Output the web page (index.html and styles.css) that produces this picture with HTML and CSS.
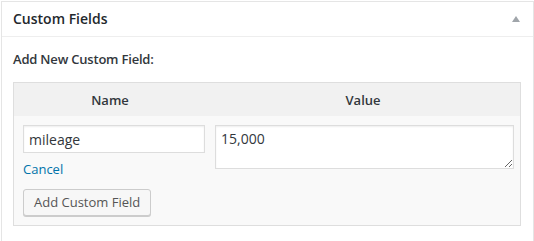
FILE: index.html
```html
<!DOCTYPE html>
<html>
<head>
<meta charset="utf-8">
<link rel="stylesheet" href="styles.css">
</head>
<body>
<div class="postbox">
  <div class="hndle">
    <h2 class="hndle-title">Custom Fields</h2>
    <span class="toggle" aria-hidden="true"></span>
  </div>
  <div class="inside">
    <p class="add-title">Add New Custom Field:</p>
    <div class="meta-table">
      <div class="meta-head">
        <div class="col-name">Name</div>
        <div class="col-value">Value</div>
      </div>
      <div class="meta-body">
        <div class="cell-left">
          <input class="key-input" type="text" value="mileage">
          <a class="cancel" href="#">Cancel</a>
          <button class="button" type="button">Add Custom Field</button>
        </div>
        <div class="cell-right">
          <textarea class="value-input">15,000</textarea>
        </div>
      </div>
    </div>
  </div>
</div>
</body>
</html>
```

FILE: styles.css
```css
* { box-sizing: border-box; }
html, body { margin: 0; padding: 0; background: #fff; }
body {
  font-family: "Open Sans", "Liberation Sans", sans-serif;
  font-size: 13px;
  color: #444;
}
.postbox {
  margin: 1px 0 0 1px;
  width: 533px;
  border: 1px solid #e5e5e5;
  background: #fff;
}
.hndle {
  height: 35px;
  border-bottom: 1px solid #eee;
  display: flex;
  align-items: center;
  justify-content: space-between;
  padding: 0 13px 0 11px;
}
.hndle-title {
  margin: 0;
  font-size: 14px;
  font-weight: 600;
  line-height: 20px;
  color: #23282d;
}
.toggle {
  width: 0;
  height: 0;
  border-left: 4px solid transparent;
  border-right: 4px solid transparent;
  border-bottom: 6px solid #a0a5aa;
  margin-top: -1px;
}
.inside {
  padding: 0 12px 20px 11px;
}
.add-title {
  margin: 13px 0;
  line-height: 19px;
  font-weight: 600;
  color: #32373c;
  letter-spacing: -0.2px;
}
.meta-table {
  border: 1px solid #dedede;
  background: #f9f9f9;
}
.meta-head {
  display: grid;
  grid-template-columns: 192px 1fr;
  height: 33px;
  background: #f1f1f1;
  font-weight: 600;
  color: #32373c;
  align-items: center;
  text-align: center;
}
.meta-body {
  display: grid;
  grid-template-columns: 192px 1fr;
  padding: 9px 0 9px;
}
.cell-left {
  padding-left: 9px;
  display: flex;
  flex-direction: column;
  align-items: flex-start;
}
.cell-right {
  padding: 0 6px 0 9px;
}
.key-input {
  width: 182px;
  height: 28px;
  margin: 0;
  padding: 3px 5px;
  border: 1px solid #ddd;
  box-shadow: inset 0 1px 2px rgba(0,0,0,.07);
  background: #fff;
  font-family: inherit;
  font-size: 14px;
  color: #32373c;
  outline: none;
}
.cancel {
  margin-top: 7px;
  line-height: 19px;
  color: #0073aa;
  text-decoration: none;
  font-size: 13px;
}
.button {
  margin-top: 10px;
  height: 27px;
  padding: 0 10px 1px;
  border: 1px solid #ccc;
  border-radius: 3px;
  background: #f7f7f7;
  box-shadow: 0 1px 0 #ccc;
  font-family: inherit;
  font-size: 13px;
  line-height: 25px;
  color: #555;
}
.value-input {
  display: block;
  width: 299px;
  height: 44px;
  margin: 0;
  padding: 3px 5px;
  border: 1px solid #ddd;
  box-shadow: inset 0 1px 2px rgba(0,0,0,.07);
  background: #fff;
  font-family: inherit;
  font-size: 14px;
  line-height: 20px;
  color: #32373c;
  resize: vertical;
  outline: none;
}
```
